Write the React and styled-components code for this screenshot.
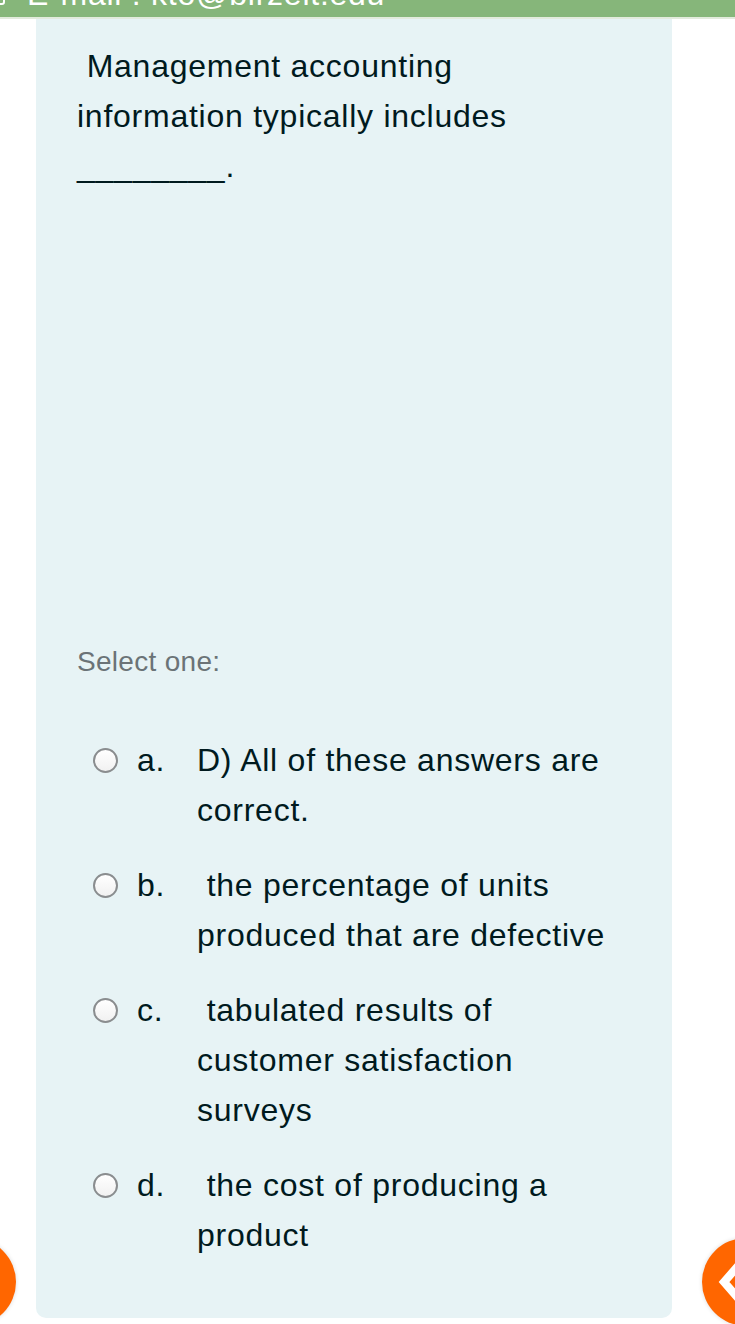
import styled, { createGlobalStyle } from "styled-components";

const GlobalStyle = createGlobalStyle`
  html, body {
    margin: 0;
    padding: 0;
    background: #fff;
  }
  body {
    font-family: "Liberation Sans", Arial, Helvetica, sans-serif;
    -webkit-font-smoothing: antialiased;
  }
`;

const Page = styled.div`
  position: relative;
  min-height: 1324px;
  overflow: hidden;
`;

// 상단 연락처 바 (스크롤로 위쪽이 잘려 있음)
const TopBar = styled.header`
  display: flex;
  align-items: flex-start;
  gap: 22px;
  height: 17px;
  overflow: hidden;
  background: #86b67a;
  border-bottom: 2px solid #e2ebdc;
  color: #fff;
`;

const MailIcon = styled.svg`
  flex-shrink: 0;
  margin-left: -17px;
  margin-top: -13px;
`;

const Contact = styled.span`
  margin-top: -22px;
  font-size: 32px;
  line-height: 32px;
  letter-spacing: 0.75px;
  white-space: nowrap;
`;

const Formulation = styled.div`
  box-sizing: border-box;
  width: 636px;
  margin-left: 36px;
  padding: 22px 52px 58px 41px;
  background: #e7f3f5;
  color: #001a1e;
  border-radius: 0 0 10px 10px;
`;

const QText = styled.p`
  margin: 0;
  min-height: 601px;
  font-size: 32px;
  line-height: 50px;
  letter-spacing: 0.75px;
`;

const Prompt = styled.div`
  font-size: 28px;
  line-height: 40px;
  letter-spacing: 0.3px;
  color: #6b7377;
`;

const Answers = styled.div`
  display: flex;
  flex-direction: column;
  gap: 25px;
  margin-top: 53px;
`;

const Option = styled.label`
  display: flex;
  align-items: flex-start;
  padding-left: 16px;
  font-size: 32px;
  line-height: 50px;
  letter-spacing: 0.75px;
`;

const Radio = styled.span`
  flex-shrink: 0;
  box-sizing: border-box;
  width: 25px;
  height: 25px;
  margin-top: 12.5px;
  margin-right: 19px;
  border: 2px solid #8a8d8f;
  border-radius: 50%;
  background: linear-gradient(#ffffff, #f1f1f1);
`;

const Letter = styled.span`
  flex-shrink: 0;
  width: 60px;
`;

const AnswerText = styled.span`
  flex: 1;
`;

const NavButton = styled.button`
  position: fixed;
  bottom: -2px;
  ${(props) => (props.$side === "left" ? "left: -72px;" : "right: -55px;")}
  width: 88px;
  height: 88px;
  padding: 0;
  border: none;
  border-radius: 50%;
  background: #ff6600;
  box-shadow: 0 0 4px rgba(0, 0, 0, 0.15);
  display: flex;
  align-items: center;
  justify-content: center;
  cursor: pointer;
`;

const options = [
  { letter: "a.", text: "D) All of these answers are correct." },
  { letter: "b.", text: "\u00a0the percentage of units produced that are defective" },
  { letter: "c.", text: "\u00a0tabulated results of customer satisfaction surveys" },
  { letter: "d.", text: "\u00a0the cost of producing a product" },
];

export default function App() {
  return (
    <Page>
      <GlobalStyle />
      <TopBar>
        <MailIcon width="22" height="18" viewBox="0 0 22 18">
          <rect x="1" y="1" width="20" height="16" rx="2" fill="none" stroke="#fff" strokeWidth="2" />
          <polyline points="1,2 11,10 21,2" fill="none" stroke="#fff" strokeWidth="2" />
        </MailIcon>
        <Contact>E-mail : kto@birzeit.edu</Contact>
      </TopBar>

      <Formulation>
        <QText>
          {"\u00a0"}Management accounting information typically includes ________.
        </QText>
        <Prompt>Select one:</Prompt>
        <Answers>
          {options.map((o) => (
            <Option key={o.letter}>
              <Radio />
              <Letter>{o.letter}</Letter>
              <AnswerText>{o.text}</AnswerText>
            </Option>
          ))}
        </Answers>
      </Formulation>

      <NavButton $side="left" aria-label="next">
        <svg width="88" height="88" viewBox="0 0 88 88">
          <polyline points="52,28 66,44 52,60" fill="none" stroke="#fff" strokeWidth="8" />
        </svg>
      </NavButton>
      <NavButton $side="right" aria-label="previous">
        <svg width="88" height="88" viewBox="0 0 88 88">
          <polyline points="36,28 22,44 36,60" fill="none" stroke="#fff" strokeWidth="8" />
        </svg>
      </NavButton>
    </Page>
  );
}
